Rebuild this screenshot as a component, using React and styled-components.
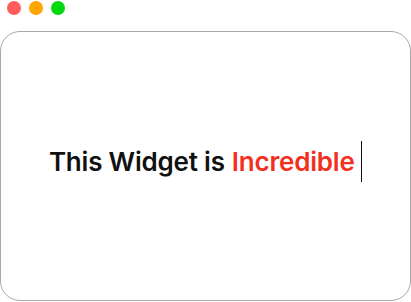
import React from "react";
import styled, { createGlobalStyle } from "styled-components";

const Global = createGlobalStyle`
  html, body { margin: 0; padding: 0; background: #ffffff; }
  body { width: 411px; height: 302px; overflow: hidden; font-family: Inter, "Noto Sans", sans-serif; }
  #root { width: 411px; height: 302px; }
`;

const Frame = styled.div`
  width: 411px;
  height: 302px;
  display: flex;
  flex-direction: column;
  box-sizing: border-box;
`;

const TitleBar = styled.div`
  display: flex;
  gap: 8px;
  padding: 1px 0 0 7px;
  height: 31px;
  box-sizing: border-box;
`;

const Dot = styled.span`
  width: 14px;
  height: 14px;
  border-radius: 50%;
  background: ${(p) => p.$color};
`;

const Card = styled.div`
  flex: 1;
  margin: 0 0 1px 0;
  border: 1px solid #a8a8a8;
  border-radius: 20px;
  display: flex;
  align-items: center;
  justify-content: center;
  padding-bottom: 9px;
`;

const Headline = styled.h1`
  margin: 0;
  font-family: Inter, "Noto Sans", sans-serif;
  font-weight: 600;
  font-size: 26px;
  letter-spacing: -0.2px;
  color: #111111;
  display: flex;
  align-items: center;
`;

const Accent = styled.span`
  color: #f2301e;
  margin-left: 7px;
`;

const Caret = styled.span`
  display: inline-block;
  width: 1.5px;
  height: 41px;
  background: #111111;
  margin-left: 6px;
`;

export default function App() {
  return (
    <>
      <Global />
      <Frame>
        <TitleBar>
          <Dot $color="#ff5b5b" />
          <Dot $color="#ffa600" />
          <Dot $color="#00d90e" />
        </TitleBar>
        <Card>
          <Headline>
            This Widget is<Accent>Incredible</Accent>
            <Caret />
          </Headline>
        </Card>
      </Frame>
    </>
  );
}
